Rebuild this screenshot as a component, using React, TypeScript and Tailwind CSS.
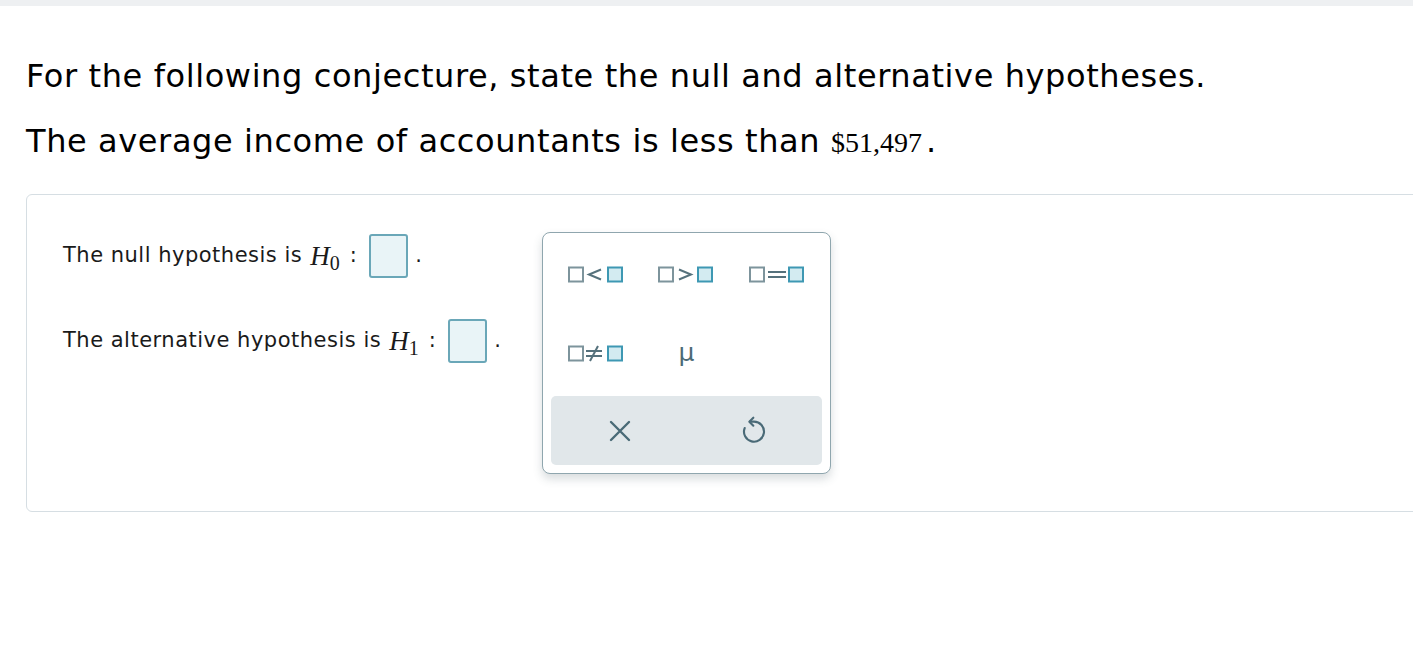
const Sq = ({ sym }: { sym: '<' | '>' | '=' | 'ne' }) => (
  <svg width="56" height="17" viewBox="0 0 56 17" fill="none">
    <rect x="1" y="1.5" width="14" height="14" stroke="#7d949c" strokeWidth="2" fill="#fff" />
    {sym === '<' && <polyline points="33,3.5 21,8.5 33,13.5" stroke="#55717c" strokeWidth="2" />}
    {sym === '>' && <polyline points="21,3.5 33,8.5 21,13.5" stroke="#55717c" strokeWidth="2" />}
    {sym === '=' && (
      <>
        <line x1="19" y1="6" x2="37" y2="6" stroke="#55717c" strokeWidth="2" />
        <line x1="19" y1="11" x2="37" y2="11" stroke="#55717c" strokeWidth="2" />
      </>
    )}
    {sym === 'ne' && (
      <>
        <line x1="18" y1="6" x2="34" y2="6" stroke="#55717c" strokeWidth="2" />
        <line x1="18" y1="11" x2="34" y2="11" stroke="#55717c" strokeWidth="2" />
        <line x1="30" y1="1" x2="22" y2="16" stroke="#55717c" strokeWidth="2" />
      </>
    )}
    <rect x="40" y="1.5" width="14" height="14" stroke="#3e98b3" strokeWidth="2" fill="#d3ebf1" />
  </svg>
)

const AnswerBox = () => (
  <span className="inline-block w-[39px] h-[44px] rounded-[3px] border-2 border-[#6aa7b8] bg-[#e9f4f7] align-middle" />
)

const Hyp = ({ label, sub }: { label: string; sub: string }) => (
  <div className="flex items-center text-[21px] tracking-[0.5px] text-[#1a1a1a]">
    <span>{label}</span>
    <span className="ml-[8px] font-['Liberation_Serif',serif] italic text-[27px] tracking-normal">H</span>
    <span className="font-['Liberation_Serif',serif] text-[20px] mt-[14px] tracking-normal">{sub}</span>
    <span className="ml-[10px] mr-[12px]">:</span>
    <AnswerBox />
    <span className="ml-[7px]">.</span>
  </div>
)

export default function App() {
  return (
    <div className="w-full h-[650px] overflow-hidden bg-white font-['DejaVu_Sans',sans-serif] text-black">
      <div className="h-[6px] bg-[#eef0f2]" />
      <div className="pl-[26px]">
        <h1 className="mt-[50px] text-[32px] leading-[40px] tracking-[0.6px] font-normal">
          For the following conjecture, state the null and alternative hypotheses.
        </h1>
        <p className="mt-[25px] text-[32px] leading-[40px] tracking-[0.6px]">
          The average income of accountants is less than{' '}
          <span className="font-['Liberation_Serif',serif] text-[28px] tracking-normal">$51,497</span>
          <span className="ml-[4px]">.</span>
        </p>

        <div className="mt-[31px] w-[1420px] h-[318px] border border-[#d6dee3] rounded-[6px] flex">
          <div className="w-[515px] pl-[36px] pt-[39px] flex flex-col gap-[41px]">
            <Hyp label="The null hypothesis is" sub="0" />
            <Hyp label="The alternative hypothesis is" sub="1" />
          </div>

          <div className="mt-[37px] w-[289px] h-[242px] rounded-[8px] border border-[#8fa6ae] bg-white shadow-[0_5px_10px_rgba(60,80,90,0.2)] px-[8px] pb-[8px] flex flex-col">
            <div className="grid grid-cols-3 mt-[16px] h-[50px] items-center justify-items-center">
              <Sq sym="<" />
              <Sq sym=">" />
              <Sq sym="=" />
            </div>
            <div className="grid grid-cols-3 mt-[29px] h-[50px] items-center justify-items-center">
              <Sq sym="ne" />
              <span className="text-[25px] text-[#4b6a76] leading-none mt-[-2px]">μ</span>
              <span />
            </div>
            <div className="mt-auto h-[69px] rounded-[5px] bg-[#e1e7ea] grid grid-cols-2 items-center justify-items-center">
              <svg width="22" height="22" viewBox="0 0 22 22" fill="none" stroke="#4a6a77" strokeWidth="2.4" strokeLinecap="round" className="ml-[2px]">
                <path d="M2 2 20 20M20 2 2 20" />
              </svg>
              <svg width="32" height="32" viewBox="0 0 24 24" fill="none" stroke="#4a6a77" strokeWidth="1.6" strokeLinecap="round" strokeLinejoin="round">
                <path d="M9 5h3a7.5 7.5 0 1 1-7 4.8" />
                <path d="M11.5 2 8.5 5l3 3" />
              </svg>
            </div>
          </div>
        </div>
      </div>
    </div>
  )
}
